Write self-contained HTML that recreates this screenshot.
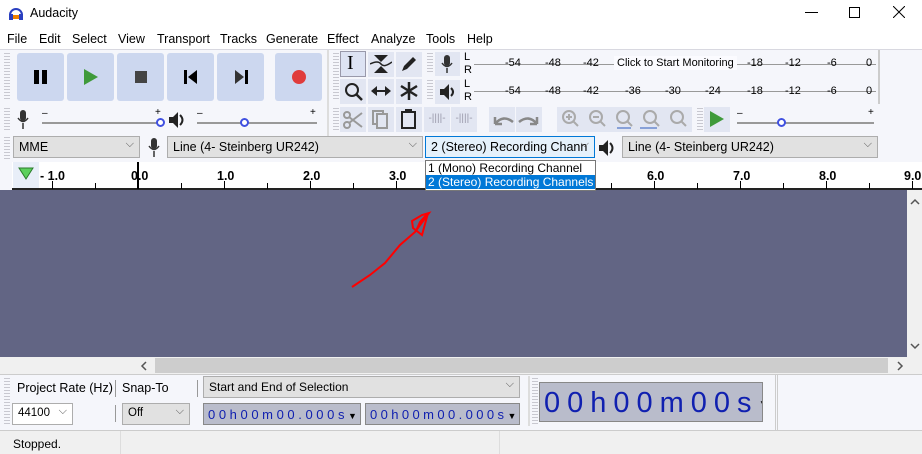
<!DOCTYPE html>
<html><head><meta charset="utf-8"><style>
*{margin:0;padding:0;box-sizing:border-box}
body{width:922px;height:454px;overflow:hidden;background:#f5f6fb;font-family:"Liberation Sans",sans-serif;font-size:12px;color:#000;position:relative}
.a{position:absolute}
.btn{position:absolute;top:53px;width:47px;height:48px;background:#ccd7ef;border-radius:3px}
.grip{position:absolute;width:6px;background:repeating-linear-gradient(#c8c8d0 0 1px,transparent 1px 3px)}
.combo{position:absolute;background:#e1e1e1;border:1px solid #adadad;font-size:12.5px;padding:3px 0 0 5px;height:22px;white-space:nowrap;overflow:hidden}
.combo:after{content:"⌵";position:absolute;right:5px;top:1px;font-size:11px;color:#555}
.menu span{position:absolute;top:5px;font-size:12.5px}
.rl{position:absolute;top:169px;font-weight:bold;font-size:12.5px}
.tk{position:absolute;width:1px;background:#000}
.tc{position:absolute;background:#b9bccb;border:1px solid #888;color:#1020b0;font-family:"Liberation Sans",sans-serif;white-space:nowrap;overflow:hidden}
.ib{position:absolute;background:#e2e6f2}
</style></head><body>
<div class="a" style="left:0;top:0;width:922px;height:27px;background:#fff"></div>
<svg class="a" style="left:8px;top:6px" width="16" height="15"><path d="M2 9 A6 6 0 0 1 14 9" fill="none" stroke="#2a3fc0" stroke-width="2"/><rect x="1" y="8" width="4" height="6" fill="#2a3fc0"/><rect x="11" y="8" width="4" height="6" fill="#2a3fc0"/><rect x="5" y="9" width="6" height="4" fill="#f08000"/></svg>
<div class="a" style="left:30px;top:6px;font-size:12.5px">Audacity</div>
<div class="a" style="left:805px;top:12px;width:13px;height:1px;background:#000"></div>
<div class="a" style="left:849px;top:7px;width:11px;height:11px;border:1px solid #000"></div>
<svg class="a" style="left:893px;top:6px" width="12" height="12"><path d="M0 0 L12 12 M12 0 L0 12" stroke="#000"/></svg>
<div class="a menu" style="left:0;top:27px;width:922px;height:22px;background:#fff">
<span style="left:7px">File</span><span style="left:39px">Edit</span><span style="left:72px">Select</span><span style="left:118px">View</span><span style="left:157px">Transport</span><span style="left:220px">Tracks</span><span style="left:266px">Generate</span><span style="left:327px">Effect</span><span style="left:371px">Analyze</span><span style="left:426px">Tools</span><span style="left:467px">Help</span></div>
<div class="a" style="left:0;top:49px;width:922px;height:1px;background:#d8d8e0"></div>
<div class="grip" style="left:4px;top:53px;height:48px"></div>
<div class="grip" style="left:4px;top:108px;height:24px"></div>
<div class="grip" style="left:4px;top:137px;height:22px"></div>
<div class="grip" style="left:333px;top:53px;height:48px"></div>
<div class="grip" style="left:333px;top:108px;height:24px"></div>
<div class="grip" style="left:427px;top:53px;height:20px"></div>
<div class="grip" style="left:427px;top:80px;height:20px"></div>
<div class="grip" style="left:697px;top:108px;height:24px"></div>
<div class="a" style="left:327px;top:50px;width:2px;height:108px;background:#ddd"></div>
<div class="btn" style="left:17px"></div><div class="btn" style="left:67px"></div><div class="btn" style="left:117px"></div><div class="btn" style="left:167px"></div><div class="btn" style="left:217px"></div><div class="btn" style="left:275px"></div>
<div class="a" style="left:34px;top:70px;width:5px;height:14px;background:#000"></div><div class="a" style="left:42px;top:70px;width:5px;height:14px;background:#000"></div>
<svg class="a" style="left:83px;top:69px" width="16" height="16"><path d="M1 0 L15 8 L1 16Z" fill="#3f9a3a"/></svg>
<div class="a" style="left:135px;top:71px;width:12px;height:12px;background:#444"></div>
<svg class="a" style="left:183px;top:69px" width="16" height="16"><rect x="1" y="1" width="3" height="14" fill="#000"/><path d="M14 1 L5 8 L14 15Z" fill="#000"/></svg>
<svg class="a" style="left:233px;top:69px" width="16" height="16"><rect x="12" y="1" width="3" height="14" fill="#000"/><path d="M2 1 L11 8 L2 15Z" fill="#333"/></svg>
<div class="a" style="left:292px;top:70px;width:14px;height:14px;border-radius:50%;background:#e03c3c"></div>
<div class="a" style="left:340px;top:51px;width:26px;height:26px;background:#dde3f3;border:1px solid #99a"></div>
<div class="a" style="left:347px;top:52px;font-size:20px;font-family:'Liberation Serif'">I</div>
<div class="ib" style="left:368px;top:52px;width:26px;height:25px"></div>
<svg class="a" style="left:370px;top:54px" width="22" height="20"><path d="M4 1 H18 L11 8Z M4 19 H18 L11 12Z" fill="#222"/><path d="M0 10 Q8 6 11 10 T22 8" stroke="#222" stroke-width="1.5" fill="none"/></svg>
<div class="ib" style="left:396px;top:52px;width:26px;height:25px"></div>
<svg class="a" style="left:400px;top:55px" width="18" height="18"><path d="M2 16 L4 11 L13 2 L16 5 L7 14Z" fill="#222"/></svg>
<div class="ib" style="left:340px;top:79px;width:26px;height:25px"></div>
<svg class="a" style="left:344px;top:82px" width="20" height="20"><circle cx="8" cy="8" r="6" fill="none" stroke="#222" stroke-width="2"/><path d="M12 12 L18 18" stroke="#222" stroke-width="2.5"/></svg>
<div class="ib" style="left:368px;top:79px;width:26px;height:25px"></div>
<svg class="a" style="left:371px;top:85px" width="20" height="12"><path d="M2 6 H18" stroke="#222" stroke-width="2"/><path d="M0 6 L6 1 V11Z M20 6 L14 1 V11Z" fill="#222"/></svg>
<div class="ib" style="left:396px;top:79px;width:26px;height:25px"></div>
<svg class="a" style="left:399px;top:81px" width="20" height="20"><path d="M10 1 V19 M2 5 L18 15 M18 5 L2 15" stroke="#222" stroke-width="2.5"/></svg>
<div class="ib" style="left:435px;top:52px;width:25px;height:24px"></div>
<svg class="a" style="left:440px;top:54px" width="14" height="20"><rect x="4" y="1" width="6" height="11" rx="3" fill="#333"/><path d="M2 9 Q7 16 12 9 M7 14 V19" stroke="#333" fill="none" stroke-width="1.5"/></svg>
<div class="ib" style="left:435px;top:80px;width:25px;height:24px"></div>
<svg class="a" style="left:439px;top:83px" width="18" height="18"><path d="M1 6 H5 L10 1 V17 L5 12 H1Z" fill="#222"/><path d="M12 5 Q16 9 12 13" stroke="#222" stroke-width="2" fill="none"/></svg>
<div class="a" style="left:464px;top:51px;font-size:11px;line-height:13px">L<br>R</div>
<div class="a" style="left:464px;top:78px;font-size:11px;line-height:13px">L<br>R</div>
<div class="a" style="left:474px;top:64px;width:402px;height:1px;background:#999"></div>
<div class="a" style="left:474px;top:91px;width:402px;height:1px;background:#999"></div>
<div class="a" style="left:505px;top:57px;font-size:11px"><span style="position:absolute;left:0">-54</span><span style="position:absolute;left:40px">-48</span><span style="position:absolute;left:78px">-42</span></div>
<div class="a" style="left:614px;top:56px;font-size:11px;background:#fbfbff;padding:1px 3px;white-space:nowrap">Click to Start Monitoring</div>
<div class="a" style="left:747px;top:57px;font-size:11px"><span style="position:absolute;left:0">-18</span><span style="position:absolute;left:38px">-12</span><span style="position:absolute;left:80px">-6</span><span style="position:absolute;left:119px">0</span></div>
<div class="a" style="left:505px;top:85px;font-size:11px;white-space:nowrap"><span style="position:absolute;left:0">-54</span><span style="position:absolute;left:40px">-48</span><span style="position:absolute;left:78px">-42</span><span style="position:absolute;left:120px">-36</span><span style="position:absolute;left:160px">-30</span><span style="position:absolute;left:200px">-24</span><span style="position:absolute;left:242px">-18</span><span style="position:absolute;left:280px">-12</span><span style="position:absolute;left:322px">-6</span><span style="position:absolute;left:361px">0</span></div>
<div class="a" style="left:878px;top:50px;width:2px;height:54px;background:#ccc"></div>
<svg class="a" style="left:16px;top:109px" width="14" height="22"><rect x="4" y="1" width="6" height="11" rx="3" fill="#333"/><path d="M2 9 Q7 16 12 9 M7 14 V20" stroke="#333" fill="none" stroke-width="1.5"/></svg>
<div class="a" style="left:42px;top:122px;width:118px;height:2px;background:#999"></div>
<div class="a" style="left:42px;top:108px;font-size:10px">–</div><div class="a" style="left:155px;top:107px;font-size:10px">+</div>
<div class="a" style="left:156px;top:118px;width:9px;height:9px;border:2px solid #4050e0;border-radius:50%;background:#fff"></div>
<svg class="a" style="left:168px;top:111px" width="20" height="18"><path d="M1 6 H5 L10 1 V17 L5 12 H1Z" fill="#222"/><path d="M12 4 Q17 9 12 14" stroke="#222" stroke-width="2" fill="none"/></svg>
<div class="a" style="left:197px;top:122px;width:120px;height:2px;background:#999"></div>
<div class="a" style="left:197px;top:108px;font-size:10px">–</div><div class="a" style="left:310px;top:107px;font-size:10px">+</div>
<div class="a" style="left:240px;top:118px;width:9px;height:9px;border:2px solid #4050e0;border-radius:50%;background:#fff"></div>
<div class="ib" style="left:340px;top:107px;width:26px;height:25px"></div>
<svg class="a" style="left:343px;top:110px" width="20" height="20"><circle cx="4" cy="5" r="3" stroke="#999" stroke-width="2" fill="none"/><circle cx="4" cy="15" r="3" stroke="#999" stroke-width="2" fill="none"/><path d="M6 7 L19 17 M6 13 L19 3" stroke="#999" stroke-width="2"/></svg>
<div class="ib" style="left:368px;top:107px;width:26px;height:25px"><div class="a" style="left:4px;top:3px;width:12px;height:15px;border:2px solid #999"></div><div class="a" style="left:8px;top:6px;width:12px;height:16px;border:2px solid #999;background:#e2e6f2"></div></div>
<div class="ib" style="left:396px;top:107px;width:26px;height:25px"><div class="a" style="left:5px;top:4px;width:15px;height:18px;border:2px solid #222"></div><div class="a" style="left:9px;top:2px;width:7px;height:4px;background:#222"></div></div>
<div class="ib" style="left:424px;top:107px;width:26px;height:25px;color:#99a;text-align:center;line-height:24px;font-size:10px">-||||-</div>
<div class="ib" style="left:451px;top:107px;width:26px;height:25px;color:#99a;text-align:center;line-height:24px;font-size:10px">-||||-</div>
<div class="ib" style="left:489px;top:107px;width:26px;height:25px"></div>
<div class="ib" style="left:516px;top:107px;width:26px;height:25px"></div>
<svg class="a" style="left:491px;top:112px" width="50" height="16"><path d="M4 12 Q12 2 22 10 M4 12 V5 M4 12 H11" stroke="#888" stroke-width="2.5" fill="none"/><path d="M46 12 Q38 2 28 10 M46 12 V5 M46 12 H39" stroke="#888" stroke-width="2.5" fill="none"/></svg>
<svg class="a" style="left:557px;top:107px" width="135" height="25">
<rect width="135" height="25" fill="#e2e6f2"/>
<g stroke="#aaa" stroke-width="2" fill="none">
<circle cx="12" cy="10" r="6"/><path d="M16 14 L21 19 M9 10 H15 M12 7 V13"/>
<circle cx="39" cy="10" r="6"/><path d="M43 14 L48 19 M36 10 H42"/>
<circle cx="66" cy="10" r="6"/><path d="M70 14 L75 19"/>
<circle cx="93" cy="10" r="6"/><path d="M97 14 L102 19"/>
<circle cx="120" cy="10" r="6"/><path d="M124 14 L129 19"/></g>
<path d="M60 21 H74 M83 21 H100" stroke="#6a8ad0" stroke-width="1.5"/></svg>
<div class="ib" style="left:704px;top:107px;width:26px;height:25px"></div>
<svg class="a" style="left:709px;top:111px" width="16" height="16"><path d="M1 0 L15 8 L1 16Z" fill="#3f9a3a"/></svg>
<div class="a" style="left:737px;top:122px;width:137px;height:2px;background:#999"></div>
<div class="a" style="left:737px;top:108px;font-size:10px">–</div><div class="a" style="left:868px;top:107px;font-size:10px">+</div>
<div class="a" style="left:777px;top:118px;width:9px;height:9px;border:2px solid #4050e0;border-radius:50%;background:#fff"></div>
<div class="combo" style="left:13px;top:136px;width:127px">MME</div>
<svg class="a" style="left:147px;top:137px" width="14" height="22"><rect x="4" y="1" width="6" height="11" rx="3" fill="#333"/><path d="M2 9 Q7 16 12 9 M7 14 V20" stroke="#333" fill="none" stroke-width="1.5"/></svg>
<div class="combo" style="left:167px;top:136px;width:256px">Line (4- Steinberg UR242)</div>
<div class="combo" style="left:425px;top:136px;width:170px;background:#e5f1fb;border-color:#0078d7;padding-right:20px">2 (Stereo) Recording Chann</div>
<svg class="a" style="left:598px;top:139px" width="20" height="18"><path d="M1 6 H5 L10 1 V17 L5 12 H1Z" fill="#222"/><path d="M12 4 Q17 9 12 14" stroke="#222" stroke-width="2" fill="none"/></svg>
<div class="combo" style="left:622px;top:136px;width:256px">Line (4- Steinberg UR242)</div>
<div class="a" style="left:12px;top:162px;width:910px;height:27px;background:#fff"></div>
<div class="a" style="left:13px;top:162px;width:26px;height:26px;background:#e8eef8"></div>
<svg class="a" style="left:18px;top:167px" width="16" height="13"><path d="M1 1 H15 L8 12Z" fill="#5cd05c" stroke="#2a7a2a"/></svg>
<div class="a" style="left:12px;top:188px;width:910px;height:2px;background:#222"></div>
<div class="rl" style="left:40px">- 1.0</div>
<div class="rl" style="left:131px">0.0</div><div class="rl" style="left:217px">1.0</div><div class="rl" style="left:303px">2.0</div><div class="rl" style="left:389px">3.0</div>
<div class="rl" style="left:647px">6.0</div><div class="rl" style="left:733px">7.0</div><div class="rl" style="left:819px">8.0</div><div class="rl" style="left:904px">9.0</div>
<div class="tk" style="left:137px;top:162px;height:27px;width:2px"></div>
<div id="ticks"></div>
<div class="a" style="left:0;top:190px;width:907px;height:167px;background:#626584"></div>
<div class="a" style="left:907px;top:190px;width:15px;height:167px;background:#f0f0f0"></div>
<svg class="a" style="left:910px;top:198px" width="10" height="8"><path d="M1 6 L5 2 L9 6" stroke="#555" stroke-width="1.5" fill="none"/></svg>
<svg class="a" style="left:910px;top:342px" width="10" height="8"><path d="M1 2 L5 6 L9 2" stroke="#555" stroke-width="1.5" fill="none"/></svg>
<svg class="a" style="left:340px;top:195px" width="100" height="100"><path d="M12 92 L30 80 L45 68 L60 50 L75 37 L89 18 L82 20 L72 26 L73 33 L82 40 L88 18 L80 27 L76 36" fill="none" stroke="#f00" stroke-width="2"/></svg>
<div class="a" style="left:425px;top:160px;width:171px;height:31px;background:#fff;border:1px solid #777;font-size:12px;line-height:14px;white-space:nowrap;overflow:hidden">
<div style="padding-left:2px">1 (Mono) Recording Channel</div>
<div style="padding-left:2px;background:#0078d7;color:#fff">2 (Stereo) Recording Channels</div></div>
<div class="a" style="left:0;top:357px;width:922px;height:17px;background:#f0f0f0"></div>
<div class="a" style="left:155px;top:358px;width:733px;height:15px;background:#cdcdcd"></div>
<svg class="a" style="left:140px;top:361px" width="8" height="10"><path d="M6 1 L2 5 L6 9" stroke="#555" stroke-width="1.5" fill="none"/></svg>
<svg class="a" style="left:896px;top:361px" width="8" height="10"><path d="M2 1 L6 5 L2 9" stroke="#555" stroke-width="1.5" fill="none"/></svg>
<div class="a" style="left:0;top:374px;width:922px;height:1px;background:#ccc"></div>
<div class="grip" style="left:4px;top:378px;height:48px"></div>
<div class="a" style="left:17px;top:381px;font-size:12.5px">Project Rate (Hz)</div>
<div class="a" style="left:115px;top:380px;width:1px;height:17px;background:#999"></div>
<div class="a" style="left:122px;top:381px;font-size:12.5px">Snap-To</div>
<div class="a" style="left:197px;top:380px;width:1px;height:17px;background:#999"></div>
<div class="combo" style="left:12px;top:403px;width:61px;background:#fff;font-size:11.5px">44100</div>
<div class="a" style="left:115px;top:405px;width:1px;height:17px;background:#999"></div>
<div class="combo" style="left:122px;top:403px;width:68px;font-size:11.5px">Off</div>
<div class="combo" style="left:203px;top:376px;width:317px;font-size:12px">Start and End of Selection</div>
<div class="tc" style="left:203px;top:403px;width:158px;height:22px;font-size:13px;padding:3px 0 0 4px;letter-spacing:3.6px">00h00m00.000s<span style="color:#000;font-size:9px;letter-spacing:0">▼</span></div>
<div class="tc" style="left:365px;top:403px;width:155px;height:22px;font-size:13px;padding:3px 0 0 4px;letter-spacing:3.4px">00h00m00.000s<span style="color:#000;font-size:9px;letter-spacing:0">▼</span></div>
<div class="a" style="left:528px;top:376px;width:2px;height:50px;background:#ddd"></div>
<div class="grip" style="left:532px;top:378px;height:48px"></div>
<div class="tc" style="left:539px;top:382px;width:224px;height:40px;font-size:29px;padding:4px 0 0 4px;letter-spacing:7px">00h00m00s<span style="font-size:10px;color:#000;vertical-align:middle;letter-spacing:0">▼</span></div>
<div class="a" style="left:775px;top:375px;width:1px;height:55px;background:#ccc"></div><div class="a" style="left:777px;top:375px;width:1px;height:55px;background:#ccc"></div>
<div class="a" style="left:0;top:430px;width:922px;height:1px;background:#ccc"></div>
<div class="a" style="left:0;top:431px;width:922px;height:23px;background:#f0f0f0"></div>
<div class="a" style="left:120px;top:431px;width:1px;height:23px;background:#ddd"></div>
<div class="a" style="left:499px;top:431px;width:1px;height:23px;background:#ddd"></div>
<div class="a" style="left:13px;top:437px;font-size:12px">Stopped.</div>
<script>
var t=document.getElementById('ticks'),h='';
for(var x=52;x<922;x+=43){var big=((x-52)/43)%2==0;h+='<div class="tk" style="left:'+x+'px;top:'+(big?181:183)+'px;height:'+(big?8:6)+'px"></div>';}
t.innerHTML=h;
</script>
</body></html>
